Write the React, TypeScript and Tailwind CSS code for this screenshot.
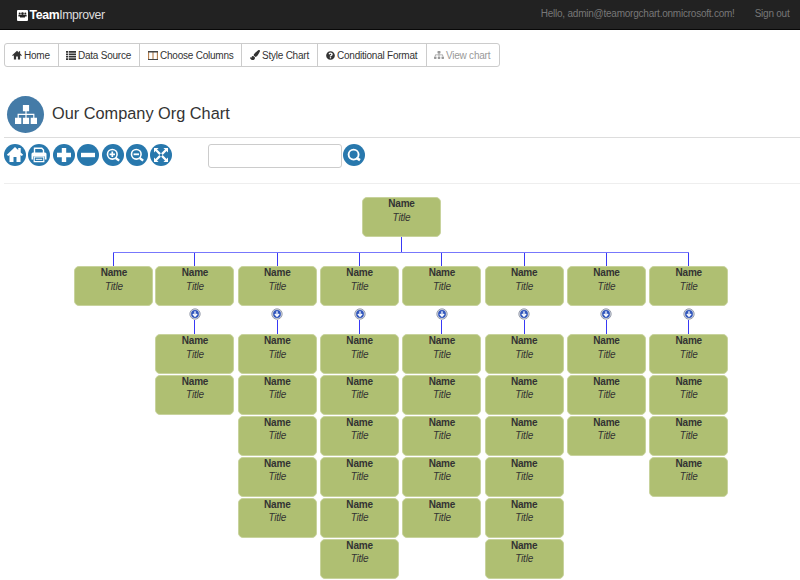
import type { ReactNode } from "react"
import { FaPaintBrush, FaQuestionCircle, FaSitemap } from "react-icons/fa"

// number of direct reports shown under each manager
const REPORTS = [0, 2, 5, 6, 5, 6, 3, 4]

function HouseIcon({ className }: { className?: string }) {
  return (
    <svg viewBox="0 0 16 16" className={className} fill="currentColor">
      <path d="M8 1 .2 8.2l1.2 1.2L3 8.3V15h3.6v-4.5h2.8V15H13V8.3l1.6 1.1 1.2-1.2L13 5.6V2h-2v1.8L8 1Z" />
    </svg>
  )
}

function ListIcon() {
  return (
    <svg viewBox="0 0 10 9" className="h-[9px] w-[10px]" fill="currentColor">
      <path d="M0 0h2v1.7H0zM2.7 0H10v1.7H2.7zM0 2.4h2v1.7H0zM2.7 2.4H10v1.7H2.7zM0 4.8h2v1.7H0zM2.7 4.8H10v1.7H2.7zM0 7.2h2v1.7H0zM2.7 7.2H10v1.7H2.7z" />
    </svg>
  )
}

function ColumnsIcon() {
  return (
    <svg viewBox="0 0 10 9" className="h-[9px] w-[10px]">
      <path d="M.6 1v7.5h8.8V1M5 1v7.5" fill="none" stroke="#b37a45" strokeWidth="1.1" />
      <path d="M0 0h10v1.6H0zM0 8h10v1H0z" fill="#444" />
    </svg>
  )
}

function NavItem({ icon, label, className }: { icon: ReactNode; label: string; className: string }) {
  return (
    <a className={`flex h-full shrink-0 items-center gap-[2px] border-r border-[#ccc] whitespace-nowrap ${className}`}>
      {icon}
      <span>{label}</span>
    </a>
  )
}

function RoundButton({ children, label }: { children: ReactNode; label: string }) {
  return (
    <button aria-label={label} className="flex size-[22px] shrink-0 items-center justify-center rounded-full bg-[#2878ad] text-white">
      <svg viewBox="0 0 22 22" className="size-[22px]" fill="none" stroke="currentColor">
        {children}
      </svg>
    </button>
  )
}

function Toolbar() {
  return (
    <div className="ml-1 flex h-[46px] items-start border-b border-[#eee] pt-[6px]">
      <div className="flex gap-[2.4px]">
        <RoundButton label="Home">
          <path d="M11 3 2.9 10.7l1.3 1.2L5.5 11v7h4v-5h3v5h4v-7l1.3.9 1.3-1.2-2.4-2.3V4h-2.5v2.1L11 3Z" fill="currentColor" stroke="none" />
        </RoundButton>
        <RoundButton label="Print">
          <path d="M6.5 9V4.3h7.3l1.7 1.7v3" strokeWidth="1.4" />
          <path d="M5 8.5h12a1.5 1.5 0 0 1 1.5 1.5v5.5H17v-3H5v3H3.5V10A1.5 1.5 0 0 1 5 8.5Z" fill="currentColor" stroke="none" />
          <path d="M6.2 13h9.6v4.6H6.2z" strokeWidth="1.2" />
          <path d="M7.8 15.3h6.4" strokeWidth="1" />
        </RoundButton>
        <RoundButton label="Expand all">
          <path d="M11 4v14M4 11h14" strokeWidth="4.4" />
        </RoundButton>
        <RoundButton label="Collapse all">
          <path d="M4 11h14" strokeWidth="4.4" />
        </RoundButton>
        <RoundButton label="Zoom in">
          <circle cx="10.3" cy="10.3" r="4.8" strokeWidth="1.6" />
          <path d="M7.6 10.3H13M10.3 7.6V13" strokeWidth="1.7" />
          <path d="m13.6 14 3.6 2.6" strokeWidth="2.4" />
        </RoundButton>
        <RoundButton label="Zoom out">
          <circle cx="10.3" cy="10.3" r="4.8" strokeWidth="1.6" />
          <path d="M7.6 10.3H13" strokeWidth="1.8" />
          <path d="m13.6 14 3.6 2.6" strokeWidth="2.4" />
        </RoundButton>
        <RoundButton label="Fit to screen">
          <path d="m5.5 5.5 4.6 4.6m6.4-4.6-4.6 4.6m-6.4 6.4 4.6-4.6m6.4 4.6-4.6-4.6" strokeWidth="2.2" />
          <path d="M4 4h4.6L4 8.6zM18 4v4.6L13.4 4zM4 18v-4.6L8.6 18zM18 18h-4.6l4.6-4.6z" fill="currentColor" stroke="none" />
        </RoundButton>
      </div>
      <input className="ml-9 h-6 w-[134px] shrink-0 rounded-[3px] border border-[#ccc] bg-white px-2 text-[9.5px] outline-none" />
      <div className="ml-[1px]">
        <RoundButton label="Search">
          <circle cx="10.6" cy="10.6" r="5" strokeWidth="1.9" />
          <path d="m13.2 13.8 3.8 2.4" strokeWidth="2.6" />
        </RoundButton>
      </div>
    </div>
  )
}

function Card() {
  return (
    <div className="h-[40px] w-[79px] shrink-0 rounded-[5px] border border-[#c8d39d] bg-[#afbf72] text-center text-[10px] leading-[13.4px] tracking-[-0.2px] text-[#333]">
      <div className="-mt-[1.2px] font-bold">Name</div>
      <div className="italic">Title</div>
    </div>
  )
}

function DrillDown() {
  return (
    <svg viewBox="0 0 12 12" className="size-[12px] shrink-0">
      <circle cx="6" cy="6" r="5.2" fill="#d5dae4" stroke="#858c9c" strokeWidth=".8" />
      <circle cx="6" cy="6" r="3.9" fill="#3358bd" />
      <path d="M6 3.2v4.6M3.9 6 6 8.2 8.1 6" fill="none" stroke="#fff" strokeWidth="1.3" />
    </svg>
  )
}

function Branch({ reports }: { reports: number }) {
  return (
    <div className="flex w-[79px] shrink-0 flex-col items-center">
      <div className="h-[13.3px] w-px bg-[#3939f5]" />
      <Card />
      {reports > 0 && (
        <>
          <div className="h-[2px]" />
          <DrillDown />
          <div className="h-[14px] w-px bg-[#3939f5]" />
          <div className="flex flex-col gap-[0.9px]">
            {Array.from({ length: reports }, (_, i) => (
              <Card key={i} />
            ))}
          </div>
        </>
      )}
    </div>
  )
}

function OrgChart() {
  return (
    <div className="flex flex-col pt-[13.4px]">
      <div className="ml-[362px] flex w-[79px] flex-col items-center">
        <Card />
        <div className="h-[14.6px] w-px bg-[#3939f5]" />
      </div>
      <div className="ml-[113px] h-px w-[576px] bg-[#7777fc]" />
      <div className="flex items-start pl-[74.4px]">
        <div className="mr-[2.1px]">
          <Branch reports={REPORTS[0]} />
        </div>
        <div className="flex gap-[3.3px]">
          {REPORTS.slice(1).map((reports, i) => (
            <Branch key={i} reports={reports} />
          ))}
        </div>
      </div>
    </div>
  )
}

export default function App() {
  return (
    <div className="h-[580px] w-[800px] overflow-hidden bg-white font-['Liberation_Sans',Arial,sans-serif] text-[10px] tracking-[-0.23px] text-[#333]">
      <header className="flex h-[30px] items-start border-b border-[#080808] bg-[#222] pl-[17px]">
        <div className="flex h-[31px] items-center gap-[1.5px] text-[12.3px] tracking-[-0.38px] text-white">
          <svg viewBox="0 0 11 11" className="size-[11px]">
            <rect width="11" height="11" rx="1" fill="#fff" />
            <g fill="#222">
              <circle cx="2.7" cy="3.6" r="1" />
              <circle cx="5.5" cy="3.6" r="1.3" />
              <circle cx="8.3" cy="3.6" r="1" />
              <path d="M1.4 4.8h8.2v1.7H8v1H3v-1H1.4z" />
            </g>
          </svg>
          <div className="leading-none">
            <b>Team</b>
            <span className="text-[#ddd]">Improver</span>
          </div>
        </div>
        <div className="mr-[10.5px] ml-auto flex h-[26px] items-center gap-5 text-[#777]">
          <span>Hello, admin@teamorgchart.onmicrosoft.com!</span>
          <a>Sign out</a>
        </div>
      </header>

      <nav className="mt-[13px] ml-1 flex h-6 w-[496px] overflow-hidden rounded-[3px] border border-[#ccc]">
        <NavItem className="w-[54px] pl-[7px]" icon={<HouseIcon className="size-[10px]" />} label="Home" />
        <NavItem className="w-[81px] pl-[7px]" icon={<ListIcon />} label="Data Source" />
        <NavItem className="w-[102px] pl-[8px]" icon={<ColumnsIcon />} label="Choose Columns" />
        <NavItem className="w-[76px] pl-[8px]" icon={<FaPaintBrush className="size-[10px]" />} label="Style Chart" />
        <NavItem className="w-[109px] pl-[8px]" icon={<FaQuestionCircle className="size-[9px]" />} label="Conditional Format" />
        <NavItem className="w-[73px] border-r-0 pl-[7px] text-[#999]" icon={<FaSitemap className="size-[10px]" />} label="View chart" />
      </nav>

      <div className="ml-1 flex h-[71px] items-end gap-[8px] border-b border-[#ddd] pb-[4px] pl-[3px]">
        <div className="flex size-[37px] items-center justify-center rounded-full bg-[#447ba7] text-white">
          <svg viewBox="0 0 22 19" className="h-[19px] w-[22px]" fill="currentColor">
            <path d="M7.9 0h6.2v6.2H7.9zM0 12.7h6.3V19H0zM7.9 12.7h6.2V19H7.9zM15.7 12.7H22V19h-6.3z" />
            <path d="M11 6v7M3.2 13V9.3h15.6V13" fill="none" stroke="currentColor" strokeWidth="1.2" />
          </svg>
        </div>
        <h1 className="h-[29px] text-[16.32px] leading-[18px] tracking-normal">Our Company Org Chart</h1>
      </div>

      <Toolbar />
      <OrgChart />
    </div>
  )
}
